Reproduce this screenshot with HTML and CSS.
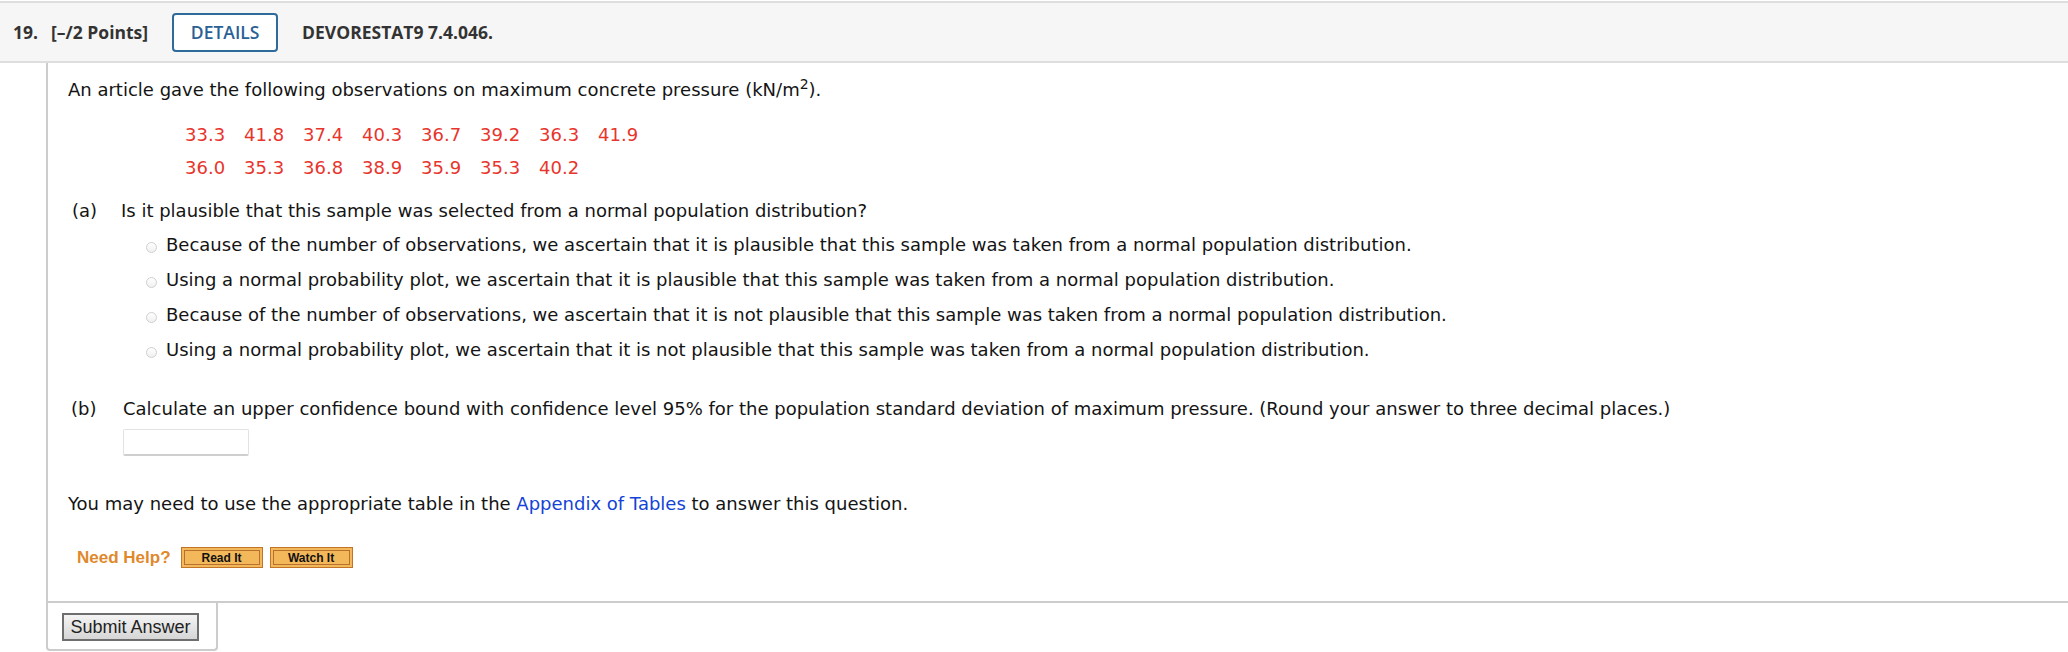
FILE: index.html
```html
<!DOCTYPE html>
<html>
<head>
<meta charset="utf-8">
<title>Question 19</title>
<link rel="stylesheet" href="styles.css">
</head>
<body>
<div class="header">
  <span class="qnum">19.</span>
  <span class="points">[–/2 Points]</span>
  <span class="details">DETAILS</span>
  <span class="code">DEVORESTAT9 7.4.046.</span>
</div>
<div class="content">
  <p class="intro">An article gave the following observations on maximum concrete pressure (kN/m<sup>2</sup>).</p>
  <div class="data">
    <span>33.3</span><span>41.8</span><span>37.4</span><span>40.3</span><span>36.7</span><span>39.2</span><span>36.3</span><span>41.9</span>
    <span>36.0</span><span>35.3</span><span>36.8</span><span>38.9</span><span>35.9</span><span>35.3</span><span>40.2</span>
  </div>
  <div class="part part-a">
    <span class="part-label">(a)</span>
    <div class="part-body">
      <p class="prompt">Is it plausible that this sample was selected from a normal population distribution?</p>
      <ul class="options">
        <li><span class="radio"></span>Because of the number of observations, we ascertain that it is plausible that this sample was taken from a normal population distribution.</li>
        <li><span class="radio"></span>Using a normal probability plot, we ascertain that it is plausible that this sample was taken from a normal population distribution.</li>
        <li><span class="radio"></span>Because of the number of observations, we ascertain that it is not plausible that this sample was taken from a normal population distribution.</li>
        <li><span class="radio"></span>Using a normal probability plot, we ascertain that it is not plausible that this sample was taken from a normal population distribution.</li>
      </ul>
    </div>
  </div>
  <div class="part part-b">
    <span class="part-label">(b)</span>
    <div class="part-body">
      <p class="prompt">Calculate an upper confidence bound with confidence level 95% for the population standard deviation of maximum pressure. (Round your answer to three decimal places.)</p>
      <div class="answer-box"></div>
    </div>
  </div>
  <p class="note">You may need to use the appropriate table in the <a class="link" href="#">Appendix of Tables</a> to answer this question.</p>
  <div class="help">
    <span class="help-label">Need Help?</span>
    <span class="help-btn">Read It</span>
    <span class="help-btn">Watch It</span>
  </div>
</div>
<div class="submit-box">
  <span class="submit-btn">Submit Answer</span>
</div>
</body>
</html>
```
FILE: styles.css
```css
html, body {
  margin: 0;
  padding: 0;
  background: #ffffff;
}
body {
  font-family: "DejaVu Sans", Verdana, sans-serif;
  font-size: 18px;
  color: #141414;
}
.header {
  margin-top: 1px;
  height: 58px;
  border-top: 2px solid #dedede;
  border-bottom: 2px solid #dedede;
  background: #f6f6f6;
  display: flex;
  align-items: center;
  padding-left: 13px;
  font-family: "Open Sans", "Noto Sans", sans-serif;
  font-weight: 700;
  font-size: 17.5px;
  color: #333333;
}
.qnum {
  margin-right: 13px;
}
.details {
  margin-left: 24px;
  margin-right: 24px;
  box-sizing: border-box;
  width: 106px;
  height: 39px;
  border: 2px solid #2f6a9c;
  border-radius: 4px;
  display: flex;
  align-items: center;
  justify-content: center;
  color: #2a6195;
  font-weight: 600;
  background: #ffffff;
}
.content {
  margin-left: 46px;
  border-left: 2px solid #cccccc;
  border-bottom: 2px solid #cccccc;
  padding: 17px 0 33px 20px;
}
p {
  margin: 0;
  line-height: 20px;
}
sup {
  font-size: 14px;
  line-height: 0;
}
.data {
  margin: 25px 0 0 117px;
  display: grid;
  grid-template-columns: repeat(8, 59px);
  row-gap: 13px;
  line-height: 20px;
  color: #e8352c;
}
.part {
  display: flex;
  margin-left: 4px;
}
.part-label {
  width: 49px;
  flex: none;
  line-height: 20px;
}
.part-a {
  margin-top: 23px;
}
.options {
  list-style: none;
  margin: 14px 0 0 0;
  padding: 0 0 0 25px;
  display: flex;
  flex-direction: column;
  gap: 15px;
}
.options li {
  display: flex;
  align-items: center;
  line-height: 20px;
}
.radio {
  box-sizing: border-box;
  width: 11px;
  height: 11px;
  border: 1px solid #d0d0d0;
  border-radius: 50%;
  background: linear-gradient(#ffffff, #f0f0f0);
  margin-right: 9px;
  margin-top: 5px;
  flex: none;
}
.part-b {
  margin-top: 39px;
  margin-left: 3px;
}
.part-b .part-label {
  width: 52px;
}
.answer-box {
  margin-top: 10px;
  width: 126px;
  height: 27px;
  box-sizing: border-box;
  border: 1px solid #e2e2e2;
  border-bottom: 2px solid #cfcfcf;
  border-radius: 2px;
  background: #ffffff;
}
.note {
  margin-top: 38px;
}
.link {
  color: #1343d6;
  text-decoration: none;
}
.help {
  margin-top: 33px;
  margin-left: 9px;
  display: flex;
  align-items: center;
  gap: 7px;
  font-family: "Liberation Sans", Arial, sans-serif;
}
.help-label {
  color: #e0892c;
  font-weight: 700;
  font-size: 17px;
  margin-right: 3px;
}
.help-btn {
  box-sizing: border-box;
  width: 82px;
  height: 21px;
  border: 1px solid #c27429;
  background: #f3b85a;
  box-shadow: inset 0 0 0 2px #f3b85a, inset 0 0 0 3px #b9702e;
  display: flex;
  align-items: center;
  justify-content: center;
  font-size: 12px;
  font-weight: 700;
  color: #111111;
}
.help-btn + .help-btn {
  width: 83px;
}
.submit-box {
  margin-left: 46px;
  width: fit-content;
  border: 2px solid #cccccc;
  border-top: none;
  border-radius: 0 0 4px 4px;
  padding: 10px 17px 8px 14px;
}
.submit-btn {
  box-sizing: border-box;
  display: flex;
  align-items: center;
  justify-content: center;
  width: 137px;
  height: 28px;
  border: 2px solid #6e6e6e;
  background: linear-gradient(#f4f4f4, #d6d6d6);
  font-family: "Liberation Sans", Arial, sans-serif;
  font-size: 18px;
  color: #222222;
}
```
